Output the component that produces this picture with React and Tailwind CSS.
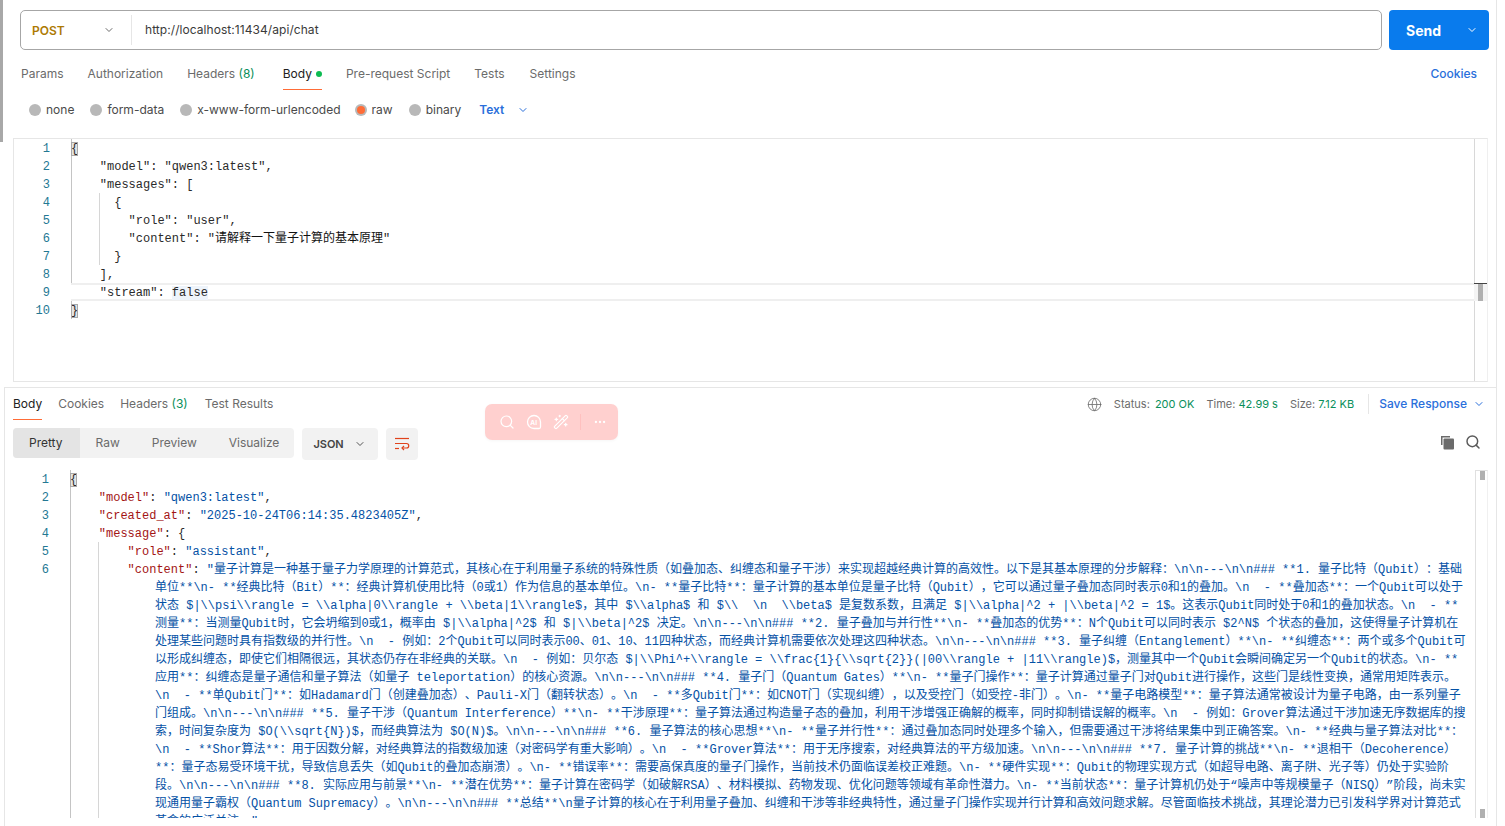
import React from 'react';
import { ChevronDown, Search, Globe, WandSparkles, Ellipsis } from 'lucide-react';

const MONO = "font-[family-name:'Liberation_Mono','Noto_Sans_CJK_SC',monospace] [text-spacing-trim:space-all]";

const contentLines = [
  String.raw`单位**\n- **经典比特（Bit）**：经典计算机使用比特（0或1）作为信息的基本单位。\n- **量子比特**：量子计算的基本单位是量子比特（Qubit），它可以通过量子叠加态同时表示0和1的叠加。\n  - **叠加态**：一个Qubit可以处于`,
  String.raw`状态 $|\\psi\\rangle = \\alpha|0\\rangle + \\beta|1\\rangle$，其中 $\\alpha$ 和 $\\  \n  \\beta$ 是复数系数，且满足 $|\\alpha|^2 + |\\beta|^2 = 1$。这表示Qubit同时处于0和1的叠加状态。\n  - **`,
  String.raw`测量**：当测量Qubit时，它会坍缩到0或1，概率由 $|\\alpha|^2$ 和 $|\\beta|^2$ 决定。\n\n---\n\n### **2. 量子叠加与并行性**\n- **叠加态的优势**：N个Qubit可以同时表示 $2^N$ 个状态的叠加，这使得量子计算机在`,
  String.raw`处理某些问题时具有指数级的并行性。\n  - 例如：2个Qubit可以同时表示00、01、10、11四种状态，而经典计算机需要依次处理这四种状态。\n\n---\n\n### **3. 量子纠缠（Entanglement）**\n- **纠缠态**：两个或多个Qubit可`,
  String.raw`以形成纠缠态，即使它们相隔很远，其状态仍存在非经典的关联。\n  - 例如：贝尔态 $|\\Phi^+\\rangle = \\frac{1}{\\sqrt{2}}(|00\\rangle + |11\\rangle)$，测量其中一个Qubit会瞬间确定另一个Qubit的状态。\n- **`,
  String.raw`应用**：纠缠态是量子通信和量子算法（如量子 teleportation）的核心资源。\n\n---\n\n### **4. 量子门（Quantum Gates）**\n- **量子门操作**：量子计算通过量子门对Qubit进行操作，这些门是线性变换，通常用矩阵表示。`,
  String.raw`\n  - **单Qubit门**：如Hadamard门（创建叠加态）、Pauli-X门（翻转状态）。\n  - **多Qubit门**：如CNOT门（实现纠缠），以及受控门（如受控-非门）。\n- **量子电路模型**：量子算法通常被设计为量子电路，由一系列量子`,
  String.raw`门组成。\n\n---\n\n### **5. 量子干涉（Quantum Interference）**\n- **干涉原理**：量子算法通过构造量子态的叠加，利用干涉增强正确解的概率，同时抑制错误解的概率。\n  - 例如：Grover算法通过干涉加速无序数据库的搜`,
  String.raw`索，时间复杂度为 $O(\\sqrt{N})$，而经典算法为 $O(N)$。\n\n---\n\n### **6. 量子算法的核心思想**\n- **量子并行性**：通过叠加态同时处理多个输入，但需要通过干涉将结果集中到正确答案。\n- **经典与量子算法对比**：`,
  String.raw`\n  - **Shor算法**：用于因数分解，对经典算法的指数级加速（对密码学有重大影响）。\n  - **Grover算法**：用于无序搜索，对经典算法的平方级加速。\n\n---\n\n### **7. 量子计算的挑战**\n- **退相干（Decoherence）`,
  String.raw`**：量子态易受环境干扰，导致信息丢失（如Qubit的叠加态崩溃）。\n- **错误率**：需要高保真度的量子门操作，当前技术仍面临误差校正难题。\n- **硬件实现**：Qubit的物理实现方式（如超导电路、离子阱、光子等）仍处于实验阶`,
  String.raw`段。\n\n---\n\n### **8. 实际应用与前景**\n- **潜在优势**：量子计算在密码学（如破解RSA）、材料模拟、药物发现、优化问题等领域有革命性潜力。\n- **当前状态**：量子计算机仍处于“噪声中等规模量子（NISQ）”阶段，尚未实`,
  String.raw`现通用量子霸权（Quantum Supremacy）。\n\n---\n\n### **总结**\n量子计算的核心在于利用量子叠加、纠缠和干涉等非经典特性，通过量子门操作实现并行计算和高效问题求解。尽管面临技术挑战，其理论潜力已引发科学界对计算范式`,
  String.raw`革命的广泛关注。"`,
];

const firstContent = String.raw`量子计算是一种基于量子力学原理的计算范式，其核心在于利用量子系统的特殊性质（如叠加态、纠缠态和量子干涉）来实现超越经典计算的高效性。以下是其基本原理的分步解释：\n\n---\n\n### **1. 量子比特（Qubit）：基础`;

function Brace({ children }) {
  return <span className="bg-[#e4e4e4] outline outline-1 outline-[#a8a8a8] -outline-offset-1">{children}</span>;
}

// one line of the editor, guide = the indent line lying over the row
function Row({ children, guide, line = true, active }) {
  return (
    <div
      className={`relative h-[18px] leading-[20px] whitespace-pre ${line && !active ? 'shadow-[-1px_0_0_#c4c4c4,inset_1px_0_0_#c4c4c4]' : ''} ${active ? 'shadow-[inset_0_2px_0_#efefef,inset_0_-2px_0_#efefef]' : ''}`}
    >
      {guide && <span className="absolute left-[28px] top-0 bottom-0 w-px bg-[#d6d6d6]" />}
      {children}
    </div>
  );
}

function Gutter({ count, narrow }) {
  return (
    <div className={`${narrow ? 'w-[57px]' : 'w-[58px]'} shrink-0 pr-[21px] text-right text-[#237893]`}>
      {Array.from({ length: count }, (_, i) => (
        <div key={i} className="h-[18px] leading-[20px]">{i + 1}</div>
      ))}
    </div>
  );
}

function Tab({ children, active, className = '' }) {
  return (
    <div className={`flex h-full items-center gap-[4px] border-b ${active ? 'border-[#ff6c37] text-[#212121]' : 'border-transparent text-[#6b6b6b]'} ${className}`}>
      {children}
    </div>
  );
}

function Radio({ label, on, className = '' }) {
  return (
    <div className={`flex items-center gap-[5px] ${className}`}>
      <span className="flex h-[12px] w-[12px] items-center justify-center rounded-full bg-[#b8b8b8]">
        {on && <span className="h-[8px] w-[8px] rounded-full bg-[#ff6c37]" />}
      </span>
      <span className="text-[#4a4a4a]">{label}</span>
    </div>
  );
}

function RequestEditor() {
  return (
    <div className={`relative ml-[10px] mr-[8px] flex h-[244px] border border-[#e6e6e6] border-r-[#efefef] text-[12px] text-[#2a2a2a] ${MONO}`}>
      <Gutter count={10} narrow />
      <div className="flex-1 overflow-hidden">
        <Row><Brace>{'{'}</Brace></Row>
        <Row>{'    "model": "qwen3:latest",'}</Row>
        <Row>{'    "messages": ['}</Row>
        <Row guide>{'      {'}</Row>
        <Row guide>{'        "role": "user",'}</Row>
        <Row guide><span>{'        "content": "'}</span><span className="text-[#111]">请解释一下量子计算的基本原理</span>"</Row>
        <Row guide>{'      }'}</Row>
        <Row>{'    ],'}</Row>
        <Row active>{'    "stream": '}<span className="bg-[#eef4fb]">false</span></Row>
        <Row><Brace>{'}'}</Brace></Row>
      </div>
      <div className="w-[13px] shrink-0 border-l border-[#d8d8d8]" />
      {/* minimap marker of the active line */}
      <div className="absolute right-0 top-[144px] h-[18px] w-[13px] border-t border-[#444] bg-[#f4f4f4]">
        <div className="ml-[4px] h-full w-[5px] bg-[#b0b0b0]" />
      </div>
    </div>
  );
}

function ResponseEditor() {
  const key = 'text-[#a31515]';
  const str = 'text-[#0451a5]';
  return (
    <div className={`ml-[7px] mr-[8px] mt-[10px] flex h-[348px] text-[12px] text-[#2a2a2a] ${MONO}`}>
      <Gutter count={6} />
      <div className="flex-1 overflow-hidden">
        <Row><Brace>{'{'}</Brace></Row>
        <Row>{'    '}<span className={key}>"model"</span>: <span className={str}>"qwen3:latest"</span>,</Row>
        <Row>{'    '}<span className={key}>"created_at"</span>: <span className={str}>"2025-10-24T06:14:35.4823405Z"</span>,</Row>
        <Row>{'    '}<span className={key}>"message"</span>: {'{'}</Row>
        <Row guide>{'        '}<span className={key}>"role"</span>: <span className={str}>"assistant"</span>,</Row>
        <Row guide>{'        '}<span className={key}>"content"</span>: <span className={str}>"{firstContent}</span></Row>
        {contentLines.map((t, i) => (
          <Row key={i} guide>
            <span className={`pl-[85px] ${str}`}>{t}</span>
          </Row>
        ))}
      </div>
      <div className="relative w-[13px] shrink-0 border-l border-t border-r border-[#e0e0e0] border-r-[#f0f0f0]">
        <div className="ml-[4px] h-[9px] w-[5px] bg-[#b0b0b0]" />
        <div className="absolute bottom-0 left-[4px] h-[9px] w-[5px] bg-[#b0b0b0]" />
      </div>
    </div>
  );
}

function WrapIcon() {
  return (
    <svg width="16" height="16" viewBox="0 0 16 16" fill="none" stroke="#e0431c" strokeWidth="1.2">
      <path d="M1 2.5h14" />
      <path d="M1 7.5h11.5a2.2 2.2 0 0 1 0 4.5H8" />
      <path d="M10 10l-2 2 2 2" />
      <path d="M1 12.5h4" />
    </svg>
  );
}

function CopyIcon() {
  return (
    <svg width="15" height="15" viewBox="0 0 15 15" fill="#6b6b6b">
      <path d="M1 1h9v1.5H2.5V10H1z" />
      <rect x="3.5" y="3.5" width="10.5" height="11" rx="1" />
    </svg>
  );
}

function AiBubble() {
  return (
    <svg width="16" height="16" viewBox="0 0 16 16" fill="none" stroke="white" strokeWidth="1.3">
      <path d="M8 1.5a6.5 6.5 0 0 1 6.5 6.5v5a1.5 1.5 0 0 1-1.5 1.5H8A6.5 6.5 0 0 1 8 1.5z" />
      <text x="4.3" y="10.5" fontSize="6.5" fontWeight="700" fill="white" stroke="none" fontFamily="Inter">AI</text>
    </svg>
  );
}

export default function App() {
  return (
    <div className="flex h-[826px] w-full overflow-hidden bg-white font-[family-name:Inter,sans-serif] text-[12px]">
      <div className="h-[142px] w-[3px] shrink-0 bg-[#a8a8a8]" />

      <div className="mr-[8px] flex min-w-0 flex-1 flex-col border-r border-[#e6e6e6]">
        {/* URL BAR */}
        <div className="flex gap-[7px] pl-[17px] pr-[7px] pt-[10px]">
          <div className="flex h-[40px] flex-1 items-center rounded-[5px] border border-[#a6a6a6]">
            <div className="flex h-[30px] w-[111px] items-center justify-between border-r border-[#e6e6e6] pl-[11px] pr-[16px]">
              <span className="mt-[2px] font-semibold text-[#ad7a03]">POST</span>
              <ChevronDown className="h-[12px] w-[12px] text-[#6b6b6b]" />
            </div>
            <span className="-mt-[1px] pl-[13px] tracking-[0.06px] text-[#3a3a3a]">http://localhost:11434/api/chat</span>
          </div>
          <div className="flex h-[40px] w-[100px] items-center justify-between rounded-[4px] bg-[#097bed] pl-[17px] pr-[11px] text-white">
            <span className="text-[14px] font-bold">Send</span>
            <ChevronDown className="h-[12px] w-[12px]" />
          </div>
        </div>

        {/* REQUEST TABS */}
        <div className="mt-[10px] flex h-[30px] pl-[18px] pr-[19px]">
          <div className="flex h-full gap-[24px]">
            <Tab className="pb-[2px]">Params</Tab>
            <Tab className="pb-[2px]">Authorization</Tab>
            <Tab className="pb-[2px]"><span>Headers <span className="text-[#0a8f5b]">(8)</span></span></Tab>
            <Tab active className="ml-[4px] pb-[2px]">Body<span className="h-[6px] w-[6px] rounded-full bg-[#0cbb52]" /></Tab>
            <Tab className="pb-[2px]">Pre-request Script</Tab>
            <Tab className="pb-[2px]">Tests</Tab>
            <Tab className="ml-px pb-[2px]">Settings</Tab>
          </div>
          <div className="ml-auto flex items-center pb-[2px] font-medium text-[#2a6fdb]">Cookies</div>
        </div>

        {/* BODY TYPE */}
        <div className="mt-[9px] flex h-[22px] items-center gap-[16px] pl-[26px]">
          <Radio label="none" />
          <Radio label="form-data" />
          <Radio label="x-www-form-urlencoded" />
          <Radio label="raw" on className="-ml-[2px]" />
          <Radio label="binary" />
          <div className="ml-[2px] flex items-center gap-[13px] font-semibold text-[#2a6fdb]">
            Text
            <ChevronDown className="h-[12px] w-[12px]" />
          </div>
        </div>

        <div className="mt-[17px]">
          <RequestEditor />
        </div>

        {/* RESPONSE */}
        <div className="ml-px mt-[5px] flex-1 border-l border-t border-[#e6e6e6]">
          <div className="flex h-[32px] items-center pl-[8px] pr-[11px]">
            <div className="flex h-full gap-[16px]">
              <Tab active>Body</Tab>
              <Tab>Cookies</Tab>
              <Tab><span>Headers <span className="text-[#0a8f5b]">(3)</span></span></Tab>
              <Tab className="ml-px">Test Results</Tab>
            </div>
            <div className="ml-auto flex items-center text-[11px] text-[#6b6b6b]">
              <Globe className="mr-[12px] h-[15px] w-[15px] text-[#6b6b6b]" strokeWidth={1.3} />
              <span>Status: <span className="ml-[2px] text-[#0a8f5b]">200 OK</span></span>
              <span className="ml-[12px]">Time: <span className="text-[#0a8f5b]">42.99 s</span></span>
              <span className="ml-[12px]">Size: <span className="text-[#0a8f5b]">7.12 KB</span></span>
              <span className="ml-[14px] h-[20px] w-px bg-[#e6e6e6]" />
              <span className="ml-[10px] text-[12px] font-medium text-[#2a6fdb]">Save Response</span>
              <ChevronDown className="ml-[6px] h-[12px] w-[12px] text-[#2a6fdb]" />
            </div>
          </div>

          <div className="mt-[8px] flex items-start pl-[8px] pr-[15px]">
            <div className="flex h-[30px] items-center overflow-hidden rounded-[4px] bg-[#f2f2f2] text-[#6b6b6b]">
              <div className="flex h-full items-center bg-[#e4e4e4] pl-[16px] pr-[17px] text-[#333]">Pretty</div>
              <div className="px-[16px]">Raw</div>
              <div className="px-[16px]">Preview</div>
              <div className="pl-[16px] pr-[15px]">Visualize</div>
            </div>
            <div className="ml-[8px] flex h-[32px] w-[76px] items-center justify-between rounded-[4px] bg-[#f2f2f2] pl-[11px] pr-[12px] text-[11px] font-semibold text-[#444]">
              JSON
              <ChevronDown className="h-[12px] w-[12px] text-[#555]" />
            </div>
            <div className="ml-[8px] flex h-[32px] w-[32px] items-center justify-center rounded-[4px] bg-[#f2f2f2]">
              <WrapIcon />
            </div>
            <div className="ml-auto flex h-[28px] items-center gap-[10px]">
              <CopyIcon />
              <Search className="h-[16px] w-[16px] text-[#5a5a5a]" strokeWidth={2.2} />
            </div>
          </div>

          <ResponseEditor />
        </div>
      </div>

      {/* floating selection toolbar over the page */}
      <div className="absolute left-[485px] top-[404px] flex h-[36px] w-[133px] items-center rounded-[7px] bg-[#ffd0cf] pl-[14px] text-white shadow-[0_1px_3px_rgba(0,0,0,0.04)]">
        <Search className="h-[16px] w-[16px]" strokeWidth={1.8} />
        <span className="ml-[11px]"><AiBubble /></span>
        <WandSparkles className="ml-[11px] h-[16px] w-[16px]" strokeWidth={1.8} />
        <span className="ml-[11px] h-[16px] w-px bg-[#ffc0bf]" />
        <Ellipsis className="ml-[12px] h-[14px] w-[14px]" strokeWidth={2} />
      </div>
    </div>
  );
}
